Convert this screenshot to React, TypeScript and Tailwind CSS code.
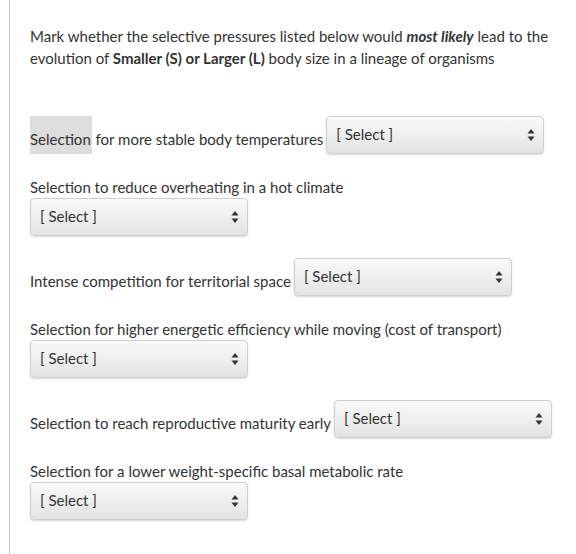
const SelectBox = () => (
  <div className="relative inline-flex h-[38px] w-[218px] shrink-0 items-center rounded-[4px] border border-[#cfcfcf] bg-gradient-to-b from-[#fafafa] to-[#e3e3e3] pl-[9px] text-[15px] text-[#333] shadow-[0_1px_2px_rgba(0,0,0,0.15)]">
    <span className="-mt-[1px]">[ Select ]</span>
    <svg className="absolute right-[8px] top-1/2 -translate-y-1/2" width="8" height="13" viewBox="0 0 8 13">
      <path d="M4 0.5 L7.5 5 L0.5 5 Z" fill="#333" />
      <path d="M4 12.5 L7.5 8 L0.5 8 Z" fill="#333" />
    </svg>
  </div>
);

const InlineRow = ({ children }: { children: React.ReactNode }) => (
  <div className="flex items-end gap-[3px]">
    {children}
  </div>
);

const StackRow = ({ label }: { label: string }) => (
  <div className="flex flex-col">
    <div className="leading-[22px]">{label}</div>
    <SelectBox />
  </div>
);

export default function App() {
  return (
    <div
      className="min-h-[554px] w-[576px] bg-white text-[15px] text-[#333]"
      style={{ fontFamily: "Lato, 'Open Sans', sans-serif" }}
    >
      <div className="ml-[9px] min-h-[554px] border-l border-[#c9c9c9] pl-[20px] pt-[25px]">
        <p className="leading-[22px]">
          Mark whether the selective pressures listed below would{" "}
          <b>
            <i>most likely</i>
          </b>{" "}
          lead to the evolution of <b>Smaller (S) or Larger (L)</b> body size in a lineage of organisms
        </p>

        <div className="mt-[47px] flex flex-col gap-[22px]">
          <InlineRow>
            <span className="leading-[22px]">
              <span className="inline-flex h-[38px] items-end bg-[#dddddd] pb-[4px] pr-[1px]">Selection</span>{" "}
              for more stable body temperatures
            </span>
            <SelectBox />
          </InlineRow>

          <StackRow label="Selection to reduce overheating in a hot climate" />

          <InlineRow>
            <span className="mb-[4px] leading-[22px]">Intense competition for territorial space</span>
            <SelectBox />
          </InlineRow>

          <StackRow label="Selection for higher energetic efficiency while moving (cost of transport)" />

          <InlineRow>
            <span className="mb-[4px] leading-[22px]">Selection to reach reproductive maturity early</span>
            <SelectBox />
          </InlineRow>

          <StackRow label="Selection for a lower weight-specific basal metabolic rate" />
        </div>
      </div>
    </div>
  );
}
